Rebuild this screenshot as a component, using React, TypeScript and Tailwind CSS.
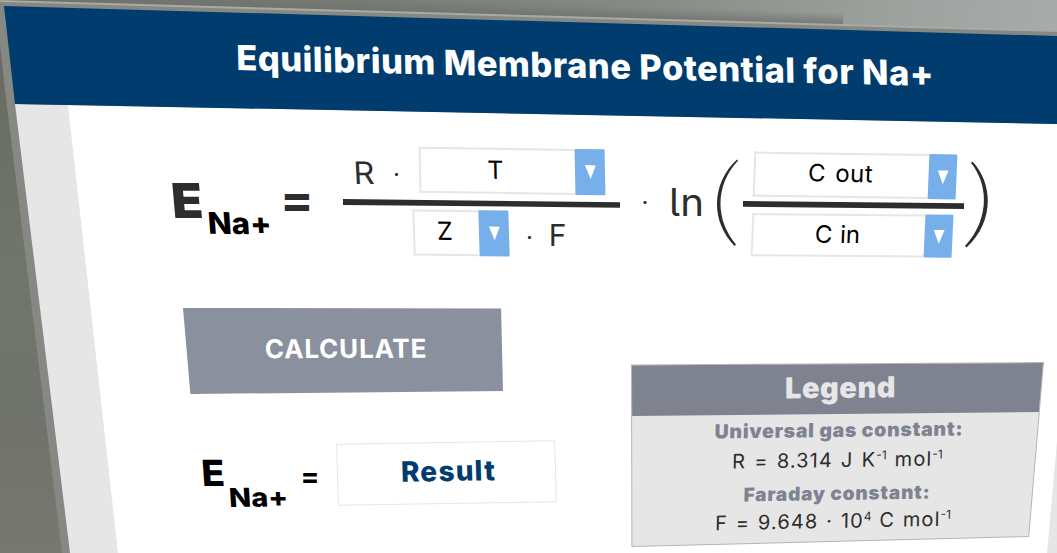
import React from "react";
import { clsx } from "clsx";

interface BoxProps {
  className?: string;
  children?: React.ReactNode;
}

// A caption centred in a fixed box, leaning with the perspective of the panel
function Caption({ className, children }: BoxProps) {
  return (
    <div
      className={clsx(
        "flex shrink-0 items-center justify-center whitespace-nowrap leading-none",
        className
      )}
    >
      {children}
    </div>
  );
}

interface PickerProps {
  label: string;
  className?: string;
  labelClass?: string;
  arrowClass?: string;
}

function Picker({ label, className, labelClass, arrowClass }: PickerProps) {
  return (
    <button className={clsx("flex shrink-0", className)}>
      <span className="flex h-full flex-1 items-center justify-center border-2 border-r-0 border-[#e6e6e6] bg-white">
        <span className={clsx("whitespace-pre leading-none text-black", labelClass)}>
          {label}
        </span>
      </span>
      <span
        className={clsx(
          "flex h-full items-center justify-center rounded-[1px] bg-[#76afea]",
          arrowClass
        )}
      >
        <svg className="h-[14px] w-[11px]" viewBox="0 0 11 14" fill="white">
          <path d="M0 0H11L5.5 14Z" />
        </svg>
      </span>
    </button>
  );
}

function Formula() {
  return (
    <div className="flex h-[146px] items-start pl-[170px] text-[#2d2d2d]">
      <Caption className="mt-[59px] h-[36px] w-[34px] text-[48px] font-black [transform:matrix(1.06,0,0.09,1,0,0)]">
        E
      </Caption>
      <Caption className="mt-[88px] ml-[4px] h-[22px] w-[63px] text-[30px] font-extrabold text-black [transform:matrix(1.04,0.01,0.07,1,0,0)]">
        Na+
      </Caption>
      <Caption className="mt-[57px] ml-[13px] h-[36px] w-[26px] text-[46px] font-extrabold [transform:matrix(1.04,0,0,0.92,0,0)]">
        =
      </Caption>

      <div className="ml-[33px] flex w-[277px] flex-col pt-[23px]">
        <div className="flex h-[52px] items-start">
          <Caption className="mt-[14px] ml-[11px] h-[23px] w-[20px] text-[31px] [transform:matrix(1.05,0,0.05,1,0,0)]">
            R
          </Caption>
          <Caption className="mt-[16px] h-[23px] w-[45px] text-[24px]">·</Caption>
          <Picker
            label="T"
            className="h-[46px] w-[186px] [transform:matrix(1,0.014,0.02,1,0,1)]"
            labelClass="text-[25px] mr-[5px] mb-[2px]"
            arrowClass="w-[30px]"
          />
        </div>
        <div className="h-[9px] bg-[#2d2d2d] [clip-path:polygon(0_0,100%_35%,100%_96%,0_66%)]" />
        <div className="mt-[2px] flex items-start pl-[70px]">
          <Picker
            label="Z"
            className="h-[46px] w-[96px] [transform:matrix(1,0.011,0.03,1,0,0)]"
            labelClass="text-[25px] mr-[4px] mb-[3px]"
            arrowClass="w-[30px]"
          />
          <Caption className="mt-[16px] h-[23px] w-[41px] text-[24px]">·</Caption>
          <Caption className="mt-[13px] h-[23px] w-[15px] text-[30px]">
            F
          </Caption>
        </div>
      </div>

      <Caption className="mt-[67px] h-[24px] w-[50px] text-[24px]">·</Caption>
      <Caption className="mt-[60px] h-[36px] w-[33px] text-[38px] [font-feature-settings:'cv05'] [transform:matrix(1.06,0,0,1,0,0)]">
        ln
      </Caption>

      <svg
        className="mt-[34px] ml-[13px] h-[90px] w-[22px] shrink-0"
        viewBox="0 0 22 90"
        fill="currentColor"
      >
        <path d="M21 1.5L22 2.8C-1 27 -1 62 20 86.500L18.500 88C-6 63 -4.500 25 21 1.500Z" />
      </svg>
      <div className="ml-[5px] flex w-[221px] shrink-0 flex-col pt-[28px]">
        <Picker
          label="C out"
          className="ml-[10px] h-[45px] w-[203px] [transform:matrix(1,0.014,-0.04,1,0.5,1)]"
          labelClass="text-[24px] [word-spacing:2px] tracking-[0.5px] mr-[3px] mb-[3px]"
          arrowClass="w-[28px]"
        />
        <div className="mt-[4px] h-[8px] bg-[#2d2d2d] [clip-path:polygon(0_0,100%_27%,100%_100%,0_73%)]" />
        <Picker
          label="C in"
          className="mt-[4px] ml-[8px] h-[43px] w-[201px] [transform:matrix(1,0.008,-0.045,1,0.5,1)]"
          labelClass="text-[24px] [word-spacing:1px] mr-[3px] mb-[2px]"
          arrowClass="w-[28px]"
        />
      </div>
      <svg
        className="mt-[36px] h-[90px] w-[25px] shrink-0"
        viewBox="0 0 25 90"
        fill="currentColor"
      >
        <path d="M8.500 1.500L7 3C26.500 27 23.500 62 1 86L2.500 87.500C29 64 30.500 25 8.500 1.500Z" />
      </svg>
    </div>
  );
}

function Controls() {
  return (
    <div className="w-[631px] shrink-0 pt-[38px]">
      <button className="ml-[183px] flex h-[86px] w-[320px] items-center justify-center bg-[#8b909e] [clip-path:polygon(0_0,99.4%_0.5%,100%_96.500%,2.3%_100%)]">
        <Caption className="mb-[5px] ml-[6px] h-[20px] w-[162px] text-[26px] font-bold tracking-[0.8px] text-white [transform:matrix(1,-0.003,0.02,1,0,0)]">
          CALCULATE
        </Caption>
      </button>
      <div className="mt-[46px] flex items-start pl-[202px] text-black">
        <Caption className="mt-[20px] h-[26px] w-[22px] text-[36px] font-extrabold [transform:matrix(1.06,0,0.07,1,0,0)]">
          E
        </Caption>
        <Caption className="mt-[47px] ml-[6px] h-[20px] w-[57px] text-[27px] font-extrabold [transform:matrix(1.07,-0.01,0.06,0.97,0,0)]">
          Na+
        </Caption>
        <Caption className="mt-[23px] ml-[15px] h-[26px] w-[16px] text-[28px] font-bold">
          =
        </Caption>
        <div className="mt-[2px] ml-[19px] flex h-[62px] w-[219px] items-center justify-center border border-[#e6e6e6] [transform:matrix(1,-0.016,0.03,1,0,0)]">
          <Caption className="mb-[4px] ml-[4px] text-[28px] font-extrabold tracking-[1.2px] text-[#003c6e]">
            Result
          </Caption>
        </div>
      </div>
    </div>
  );
}

function Exponent({ children }: BoxProps) {
  return <sup className="top-[-7px] text-[12px] leading-none tracking-normal">{children}</sup>;
}

function Legend() {
  return (
    <div className="mt-[92px] h-[185px] w-[413px] bg-[#b4b4b4] p-px [clip-path:polygon(0_1.3%,100%_0,96.4%_94.6%,0.1%_100%)]">
      <div className="flex h-full flex-col items-center bg-[#e6e6e6] [clip-path:polygon(0_1.3%,100%_0,96.4%_94.6%,0.1%_100%)]">
        <div className="flex h-[53px] w-full justify-center bg-[#7f838f] [clip-path:polygon(0_0,100%_0,100%_92.500%,0_100%)]">
          <Caption className="h-[48px] w-[111px] pl-[6px] text-[29px] font-black tracking-[0.5px] text-[#e6e6e6] [transform:matrix(1,-0.01,0,1,0,0)]">
            Legend
          </Caption>
        </div>
        <Caption className="mt-[5px] h-[20px] w-[248px] pl-[2px] text-[19.500px] font-black tracking-[0.7px] text-[#7f838f] [transform:matrix(1,-0.012,-0.02,1,0,0)]">
          Universal gas constant:
        </Caption>
        <Caption className="mt-[9px] h-[20px] w-[211px] text-[20px] tracking-[1.1px] text-[#2d2d2d] [word-spacing:1.4px] [transform:matrix(1,-0.015,-0.02,1,0,0)]">
          <span>R = 8.314 J K<Exponent>-1</Exponent> mol<Exponent>-1</Exponent></span>
        </Caption>
        <Caption className="mt-[13px] mr-[2px] h-[20px] w-[188px] text-[19px] font-black tracking-[0.8px] text-[#7f838f] [transform:matrix(1,-0.016,-0.02,1,0,0)]">
          Faraday constant:
        </Caption>
        <Caption className="mt-[8px] mr-[9px] h-[20px] w-[236px] text-[20px] tracking-[1.1px] text-[#2d2d2d] [word-spacing:1.1px] [transform:matrix(1,-0.02,-0.02,1,0,0)]">
          <span>F = 9.648 · 10<Exponent>4</Exponent> C mol<Exponent>-1</Exponent></span>
        </Caption>
      </div>
    </div>
  );
}

// Layers share one grid cell so the panel, its bezel and the backdrop stack up
function Layer({ className }: BoxProps) {
  return <div className={clsx("[grid-area:1/1]", className)} />;
}

export default function App() {
  return (
    <div className="grid h-[553px] w-[1057px] overflow-hidden bg-[linear-gradient(97deg,#70746b_0%,#777a72_25%,#858984_55%,#9da29f_80%,#abb0af_100%)] font-['Inter',sans-serif]">
      <Layer className="bg-[linear-gradient(#656960,#71756c_50%,#70736b_75%,#77776f)] [clip-path:polygon(0_0,1%_5%,8%_100%,0_100%)]" />
      <Layer className="bg-[linear-gradient(181.7deg,transparent_19px,#70726e_33px)] [clip-path:polygon(0_0,843px_0,843px_25px,0_2px)]" />
      <Layer className="bg-[#a8aba4] [clip-path:polygon(0_0,1057px_30px,1057px_60px,4px_30px)]" />
      <Layer className="bg-[#868884] [clip-path:polygon(0_2px,1057px_32px,1057px_553px,62px_553px,5px_90px,0_45px)]" />
      <Layer className="bg-[#e6e6e6] [clip-path:polygon(15px_104px,1057px_124px,1057px_553px,70px_553px)]" />
      <Layer className="bg-white [clip-path:polygon(68px_105px,1057px_124px,1057px_441px,1047px_553px,118px_553px)]" />
      <Layer className="bg-[#003c6e] [clip-path:polygon(4px_6px,1057px_36px,1057px_124px,15px_104px)]" />

      <div className="isolate flex flex-col [grid-area:1/1]">
        <header className="flex h-[124px] shrink-0 pt-[52px] pl-[237px]">
          <Caption className="h-[28px] w-[696px] text-[34.500px] font-extrabold tracking-[0.45px] text-white [transform:matrix(1,0.023,0.02,1,0,0)]">
            Equilibrium Membrane Potential for Na+
          </Caption>
        </header>
        <Formula />
        <div className="flex">
          <Controls />
          <Legend />
        </div>
      </div>
    </div>
  );
}
